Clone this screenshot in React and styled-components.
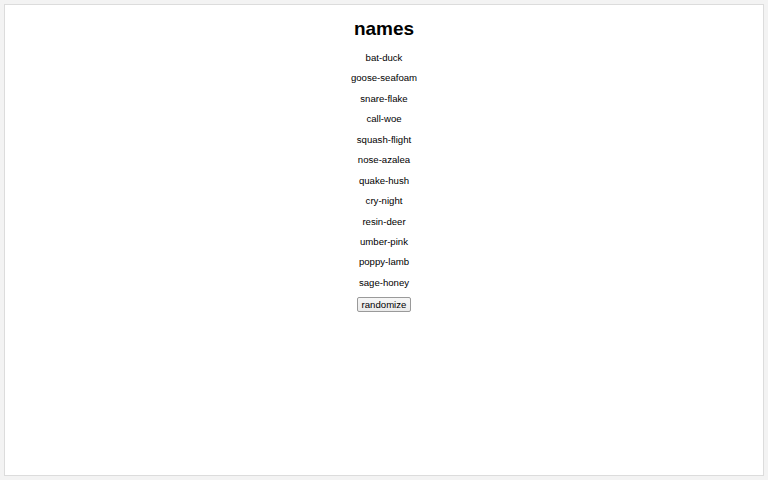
import React, { useState } from "react";
import styled, { createGlobalStyle } from "styled-components";

const Global = createGlobalStyle`
  html, body { margin: 0; padding: 0; background: #f3f3f3; }
  body { padding: 4px; font-family: "Liberation Sans", Arial, sans-serif; }
`;

const Panel = styled.div`
  box-sizing: border-box;
  width: 760px;
  height: 472px;
  background: #fff;
  border: 1px solid #dcdcdc;
  display: flex;
  flex-direction: column;
  align-items: center;
  padding-top: 12px;
`;

const Title = styled.h1`
  margin: 0 0 8px;
  font-size: 19px;
  font-weight: bold;
  line-height: 23px;
  color: #000;
`;

const List = styled.ul`
  list-style: none;
  margin: 0;
  padding: 0;
  display: flex;
  flex-direction: column;
  align-items: center;
`;

const Item = styled.li`
  font-size: 9.6px;
  line-height: 12px;
  padding: 4px 0;
  margin: 0;
  height: 12.45px;
  color: #000;
`;

const Button = styled.button`
  margin-top: 4px;
  font-family: "Liberation Sans", Arial, sans-serif;
  font-size: 9.6px;
  line-height: 11px;
  padding: 1px 4px;
  color: #000;
  background: linear-gradient(#f6f6f6, #ebebeb);
  border: 1px solid #9a9a9a;
  border-radius: 2px;
`;

const initial = [
  "bat-duck",
  "goose-seafoam",
  "snare-flake",
  "call-woe",
  "squash-flight",
  "nose-azalea",
  "quake-hush",
  "cry-night",
  "resin-deer",
  "umber-pink",
  "poppy-lamb",
  "sage-honey",
];

export default function App() {
  const [names, setNames] = useState(initial);
  const shuffle = () =>
    setNames((n) => [...n].sort(() => Math.random() - 0.5));
  return (
    <>
      <Global />
      <Panel>
        <Title>names</Title>
        <List>
          {names.map((n) => (
            <Item key={n}>{n}</Item>
          ))}
        </List>
        <Button onClick={shuffle}>randomize</Button>
      </Panel>
    </>
  );
}
